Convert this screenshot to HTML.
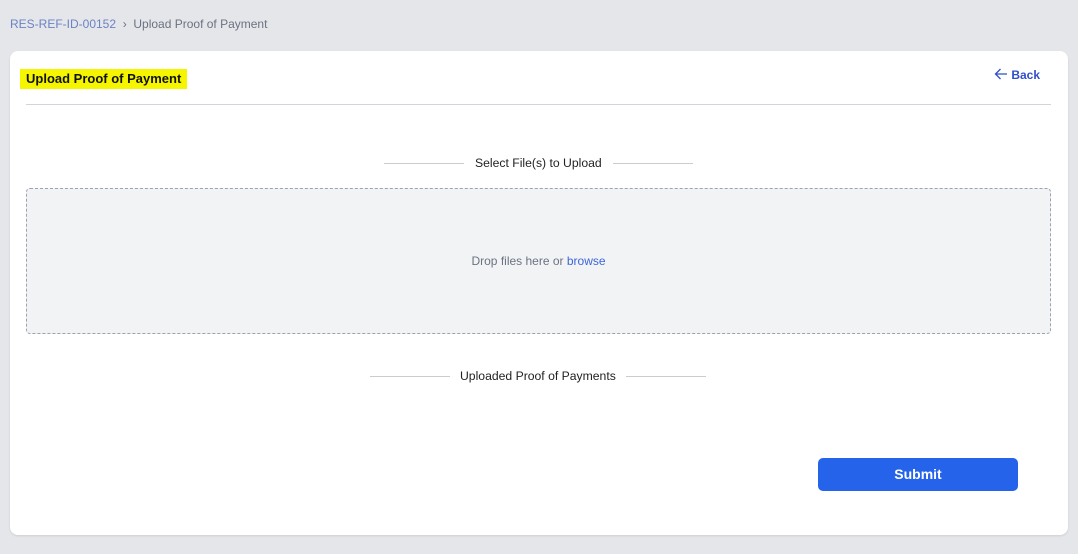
<!DOCTYPE html>
<html><head><style>
body{margin:0;width:1078px;height:554px;background:#e5e6ea;font-family:"Liberation Sans",sans-serif;position:relative;overflow:hidden}
.bc{position:absolute;left:10px;top:17px;font-size:12px;color:#6b7280}
.bc a{color:#6b82c4}
.card{position:absolute;left:10px;top:51px;width:1058px;height:484px;background:#fff;border-radius:8px;box-shadow:0 1px 2px rgba(0,0,0,.1)}
.title{position:absolute;left:10px;top:18px;background:#f5f500;padding:2px 6px 3px 6px;font-weight:bold;font-size:13px;color:#111}
.back{position:absolute;left:984px;top:17px;color:#2f4fc8;font-weight:bold;font-size:12px}
.hr{position:absolute;left:16px;top:53px;width:1025px;height:1px;background:#d1d5db}
.div{position:absolute;font-size:12.2px;color:#222;display:flex;align-items:center}
.div span.l{display:inline-block;width:80px;height:1px;background:#ccc}
.drop{position:absolute;left:16px;top:137px;width:1023px;height:144px;border:1px dashed #9ca3af;border-radius:4px;background:#f2f3f5;text-align:center;line-height:144px;font-size:12px;color:#6b7280}
.drop b{color:#3b66d6;font-weight:normal}
.btn{position:absolute;left:808px;top:407px;width:200px;height:33px;background:#2563eb;border-radius:5px;color:#fff;font-weight:bold;font-size:14px;text-align:center;line-height:33px}
</style></head><body>
<div class="bc"><a>RES-REF-ID-00152</a> &nbsp;›&nbsp; Upload Proof of Payment</div>
<div class="card">
<div class="title">Upload Proof of Payment</div>
<div class="back"><svg width="14" height="12" viewBox="0 0 14 12" style="vertical-align:-1px"><path d="M13 6H1.5M6.5 1L1.5 6l5 5" fill="none" stroke="#2f4fc8" stroke-width="1.3"/></svg> Back</div>
<div class="hr"></div>
<div class="div" style="left:374px;top:105px"><span class="l"></span><span style="margin:0 11px">Select File(s) to Upload</span><span class="l"></span></div>
<div class="drop">Drop files here or <b>browse</b></div>
<div class="div" style="left:360px;top:318px"><span class="l"></span><span style="margin:0 10px">Uploaded Proof of Payments</span><span class="l"></span></div>
<div class="btn">Submit</div>
</div>
</body></html>
